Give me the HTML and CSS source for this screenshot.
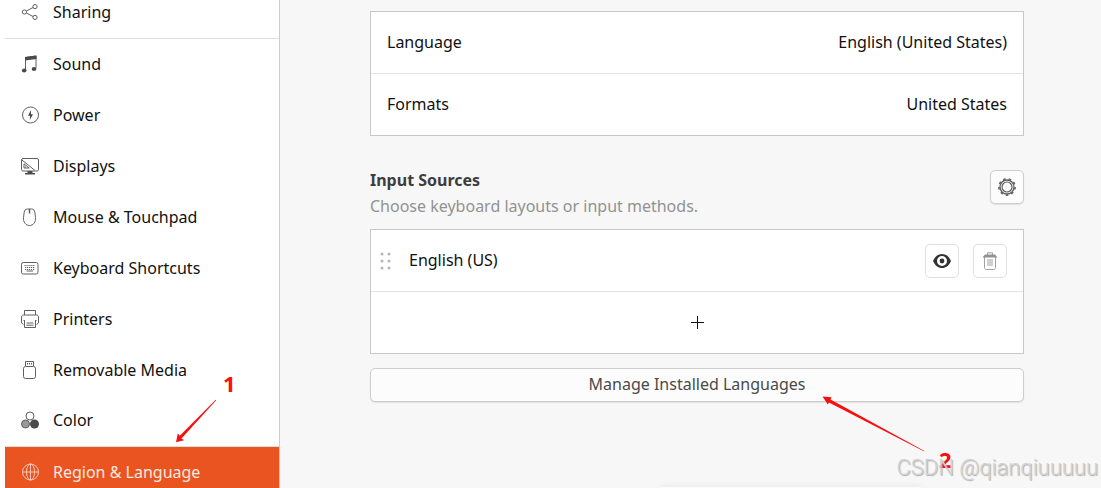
FILE: index.html
```html
<!DOCTYPE html>
<html lang="en">
<head>
    <meta charset="UTF-8">
    <meta name="viewport" content="width=device-width, initial-scale=1">
    <title>Region &amp; Language</title>
    <link rel="stylesheet" href="styles.css">
</head>
<body>
    <div class="window">
        <nav class="sidebar">
            <a class="item group-end" href="#sharing">
                <svg class="icon" viewBox="0 0 18 18"><circle cx="3.4" cy="9" r="2.1"/><circle cx="14" cy="3.6" r="2.1"/><circle cx="14" cy="14.4" r="2.1"/><path d="M5.3 8l6.8-3.5M5.3 10l6.8 3.5"/></svg>
                <span>Sharing</span>
            </a>
            <a class="item" href="#sound">
                <svg class="icon" viewBox="0 0 18 18"><path d="M4.500 14.500V2.500L15 1v12.500"/><path class="solid" d="M4 2L15.500.500V4L4 5.500z"/><ellipse class="solid" cx="3.200" cy="15.500" rx="2.300" ry="2"/><ellipse class="solid" cx="13" cy="14" rx="2.300" ry="2"/></svg>
                <span>Sound</span>
            </a>
            <a class="item" href="#power">
                <svg class="icon" viewBox="0 0 18 18"><circle cx="9.500" cy="9" r="8"/><path class="solid" d="M10 4L7 9.800h2L8.800 14 12 8.200H10z"/></svg>
                <span>Power</span>
            </a>
            <a class="item" href="#displays">
                <svg class="icon" viewBox="0 0 18 18"><rect x=".5" y="1.500" width="17" height="12.500" rx="1.500"/><path d="M1 3l13 10.500M3 6.800V11h5.200zM4.500 9.500v1"/><path class="solid" d="M6.500 14h5v2H14v1.500H4V16h2.500z"/></svg>
                <span>Displays</span>
            </a>
            <a class="item" href="#mouse">
                <svg class="icon" viewBox="0 0 18 18"><path d="M6.500 1h4c2.200 0 3 1.400 3.300 3.200l.7 5.300c.4 4.800-2.300 8-6 8s-6.400-3.200-6-8l.7-5.300C3.500 2.400 4.300 1 6.500 1z"/><path d="M8.500 1v4.500" stroke-width="1.500"/></svg>
                <span>Mouse &amp; Touchpad</span>
            </a>
            <a class="item" href="#keyboard">
                <svg class="icon" viewBox="0 0 18 18"><rect x=".5" y="3.500" width="16.500" height="11.500" rx="1.800"/><path d="M3.500 6.500h10.500M4 8.500h10M4 10.500h10" stroke-dasharray="1.200 .8"/><path d="M5.500 12h6.500"/></svg>
                <span>Keyboard Shortcuts</span>
            </a>
            <a class="item" href="#printers">
                <svg class="icon" viewBox="0 0 18 18"><path d="M3.500 5V.500h11V5"/><path d="M2.500 14.500L.5 13V7c0-1.200.8-2 2-2h13c1.200 0 2 .8 2 2v6l-2 1.500"/><path d="M3.500 10.500v7h11v-7M2.500 10.500h1.500M14 10.500h1.500M5.500 13h7M5.500 15.200h7"/></svg>
                <span>Printers</span>
            </a>
            <a class="item" href="#media">
                <svg class="icon" viewBox="0 0 18 18"><rect x="2.500" y="5.500" width="12" height="12" rx="2"/><path d="M4.500 5V.500h8V5M6.500 2v1.500M8.500 2v1.500M10.500 2v1.500"/></svg>
                <span>Removable Media</span>
            </a>
            <a class="item group-end" href="#color">
                <svg class="icon" viewBox="0 0 18 18"><circle cx="9" cy="5" r="4"/><circle class="light" cx="4.500" cy="13" r="4"/><circle class="solid" cx="13.500" cy="13" r="4.500"/></svg>
                <span>Color</span>
            </a>
            <a class="item active" href="#region">
                <svg class="icon" viewBox="0 0 18 18"><circle cx="9.500" cy="9" r="8"/><ellipse cx="9.500" cy="9" rx="4" ry="8"/><path d="M1.500 9h16M9.500 1v16"/></svg>
                <span>Region &amp; Language</span>
            </a>
        </nav>

        <main class="content">
            <div class="list">
                <button class="row" type="button"><span>Language</span><span>English (United States)</span></button>
                <button class="row" type="button"><span>Formats</span><span>United States</span></button>
            </div>

            <div class="heading">
                <div>
                    <h2>Input Sources</h2>
                    <p>Choose keyboard layouts or input methods.</p>
                </div>
                <button class="btn square" type="button" aria-label="Input source options">
                    <svg class="icon" viewBox="0 0 18 18"><circle cx="9" cy="9" r="5" stroke-width="1.200"/><circle cx="9" cy="9" r="7" stroke-width="1.300"/><circle cx="9" cy="9" r="8.100" stroke-width="1.600" stroke-dasharray="2.600 3.055"/></svg>
                </button>
            </div>

            <div class="list">
                <div class="row source">
                    <svg class="handle" viewBox="0 0 12 18"><circle cx="2" cy="2" r="1.500"/><circle cx="9" cy="2" r="1.500"/><circle cx="2" cy="9" r="1.500"/><circle cx="9" cy="9" r="1.500"/><circle cx="2" cy="16" r="1.500"/><circle cx="9" cy="16" r="1.500"/></svg>
                    <span class="name">English (US)</span>
                    <button class="btn square flat" type="button" aria-label="View layout">
                        <svg class="icon" viewBox="0 0 18 18"><path class="eye" fill-rule="evenodd" d="M0 9c2-4.500 5-7 9-7s7 2.500 9 7c-2 4.500-5 7-9 7s-7-2.500-9-7zM9 4a5 5 0 1 0 0 10A5 5 0 1 0 9 4z"/><circle class="eye" cx="9" cy="9" r="2.400"/></svg>
                    </button>
                    <button class="btn square flat" type="button" aria-label="Remove" disabled>
                        <svg class="icon" viewBox="0 0 18 18"><path d="M3.500 5v10.500c0 1.200.6 2 1.800 2h7.400c1.200 0 1.800-.8 1.800-2V5M6.500 3V.800h5V3M7 7v7M9 7v7M11 7v7"/><path class="solid" d="M4 2.500h10l2.500 3h-15z"/></svg>
                    </button>
                </div>
                <button class="row add" type="button" aria-label="Add an input source">
                    <svg viewBox="0 0 13 13"><path d="M6.500 0v13M0 6.500h13"/></svg>
                </button>
            </div>

            <button class="btn manage" type="button">Manage Installed Languages</button>
        </main>
    </div>

    <div class="popup"></div>

    <svg class="marks" viewBox="0 0 1101 488">
        <path d="M216.200 400.200L181.500 438.500 184 440.200 176 442.200 177.800 433.600 179.800 435.800 215.700 399.800z"/>
        <path d="M923.800 451.200L829 402.500 827.800 404.500 822.500 396.500 831.500 397.200 830.500 399.400 924 450.700z"/>
        <text x="223" y="392">1</text>
        <text x="939" y="468">2</text>
    </svg>
    <div class="watermark">CSDN @qianqiuuuuu</div>
</body>
</html>
```
FILE: styles.css
```css
* {
    box-sizing: border-box;
    margin: 0;
    padding: 0;
}
body {
    position: relative;
    height: 100vh;
    overflow: hidden;
    background-color: #fff;
    color: #111;
    font-family: "Noto Sans", "Open Sans", sans-serif;
    font-size: 16px;
    line-height: 26px;
}
button {
    font: inherit;
    color: inherit;
    cursor: pointer;
}
.window {
    display: flex;
    height: 100%;
    padding-left: 5px;
}

/* sidebar, scrolled down to the last entries */
.sidebar {
    display: flex;
    flex: 0 0 275px;
    flex-direction: column;
    justify-content: flex-start;
    border-right: 1px solid #cdcdcd;
    overflow: hidden;
}
.item {
    display: flex;
    flex: none;
    align-items: center;
    gap: 14px;
    height: 51px;
    padding: 0 16px 2px;
    color: inherit;
    text-decoration: none;
}
.item:first-child {
    margin-top: -12px;
}
.item.group-end {
    border-bottom: 1px solid #dedede;
}
.item.active {
    background-color: #e95420;
    color: #fde9e1;
}
.icon {
    flex: none;
    width: 18px;
    height: 18px;
    fill: none;
    stroke: #606060;
    stroke-width: 1;
}
.active .icon {
    stroke: #f9c6b3;
}
.icon .solid {
    fill: #4a4a4a;
    stroke: none;
}
.icon .light {
    fill: #999;
}
.icon .eye {
    fill: #333;
    stroke: none;
}

.content {
    flex: 1;
    padding: 11px 77px 0 90px;
    background-color: #f7f7f7;
}
.list {
    border: 1px solid #c8c8c8;
    background-color: #fff;
}
.row {
    display: flex;
    align-items: center;
    justify-content: space-between;
    width: 100%;
    height: 61px;
    padding: 0 16px;
    border: 0;
    background-color: #fff;
}
.row span {
    padding-bottom: 2px;
}
.row + .row {
    height: 62px;
    border-top: 1px solid #e3e3e3;
}
.heading {
    display: flex;
    align-items: flex-start;
    justify-content: space-between;
    margin: 31px 0 10px;
}
.heading h2 {
    color: #3d3d3d;
    font-size: 16px;
    font-weight: bold;
}
.heading p {
    color: #929292;
}
.heading .btn {
    margin-top: 3px;
}
.btn {
    border: 1px solid #cdcdcd;
    border-radius: 5px;
    background-color: #fcfcfc;
    box-shadow: 0 1px 1px #e2e2e2;
}
.square {
    display: flex;
    align-items: center;
    justify-content: center;
    width: 34px;
    height: 34px;
}
.flat {
    border-color: #e0e0e0;
    background-color: #fff;
    box-shadow: none;
}
.btn:disabled .icon {
    opacity: 0.6;
}
.source {
    gap: 14px;
    padding-left: 9px;
}
.source .name {
    flex: 1;
    padding-left: 3px;
}
.handle {
    width: 12px;
    height: 18px;
    fill: #b5b5b5;
}
.row.add {
    justify-content: center;
}
.add svg {
    width: 13px;
    height: 13px;
    stroke: #111;
}
.manage {
    display: block;
    width: 100%;
    height: 34px;
    margin-top: 14px;
    padding-bottom: 2px;
    color: #4a4a4a;
    line-height: 30px;
}

/* top edge of the notice that rises from the bottom */
.popup {
    position: absolute;
    left: 60%;
    bottom: 0;
    width: 260px;
    height: 1px;
    background-color: #fcfcfc;
    box-shadow: 0 0 6px #bbb;
}
.marks {
    position: absolute;
    left: 0;
    top: 0;
    width: 1101px;
    height: 488px;
    fill: #fb0d0d;
    font-size: 22px;
    font-weight: bold;
    pointer-events: none;
}
.watermark {
    position: absolute;
    right: 3px;
    bottom: 7px;
    color: #d2d2d2;
    font-family: Roboto, sans-serif;
    font-size: 22px;
    font-weight: 300;
    text-shadow: 1px 1px 1px #aaa;
}
```
